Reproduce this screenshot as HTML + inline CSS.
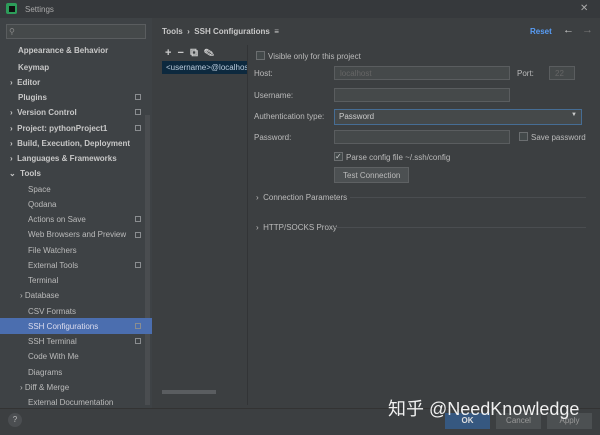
<!DOCTYPE html><html><head><style>
*{margin:0;padding:0;box-sizing:border-box}
body{width:600px;height:435px;background:#3c3f41;font-family:"Liberation Sans",sans-serif;font-size:8px;color:#bbb;position:relative;overflow:hidden}
.a{position:absolute;white-space:nowrap}
.side{left:0;top:18px;width:152px;height:390px;background:#3e4245}
.b{font-weight:bold;color:#c8c8c8}
.inp{position:absolute;background:#45494a;border:1px solid #5a5d5f;height:14px}
.ic{position:absolute;width:6px;height:6px;border:1px solid #8a8d90;left:135px}
.cb{position:absolute;width:9px;height:9px;border:1px solid #6b6e70;background:#43494a}
</style></head><body>
<div class="a" style="left:0;top:0;width:600px;height:18px;background:#36393c"></div>
<div class="a" style="left:6px;top:3px;width:11px;height:11px;background:#2d9d5a;border-radius:2px"></div>
<div class="a" style="left:9px;top:6px;width:6px;height:6px;background:#111"></div>
<div class="a" style="left:25px;top:5px;color:#aaa">Settings</div>
<div class="a" style="left:580px;top:3px;color:#aaa;font-size:10px">✕</div>
<div class="a side"></div>
<div class="a" style="left:6px;top:24px;width:140px;height:15px;background:#45494a;border:1px solid #5a5d5f"></div>
<div class="a" style="left:9px;top:27px;color:#888">⚲</div>
<div class="a" style="left:145px;top:115px;width:5px;height:290px;background:#4a4d50"></div>
<div class="a" style="left:0;top:318px;width:152px;height:16px;background:#4b6eaf"></div>
<div class="a b" style="left:18px;top:46px">Appearance &amp; Behavior</div>
<div class="a b" style="left:18px;top:63px">Keymap</div>
<div class="a b" style="left:10px;top:78px">›&nbsp; Editor</div>
<div class="a b" style="left:18px;top:93px">Plugins</div>
<div class="a b" style="left:10px;top:108px">›&nbsp; Version Control</div>
<div class="a b" style="left:10px;top:124px">›&nbsp; Project: pythonProject1</div>
<div class="a b" style="left:10px;top:139px">›&nbsp; Build, Execution, Deployment</div>
<div class="a b" style="left:10px;top:154px">›&nbsp; Languages &amp; Frameworks</div>
<div class="a b" style="left:9px;top:169px">⌄&nbsp; Tools</div>
<div class="ic" style="top:94px"></div><div class="ic" style="top:109px"></div><div class="ic" style="top:125px"></div><div class="ic" style="top:216px"></div><div class="ic" style="top:232px"></div><div class="ic" style="top:262px"></div><div class="ic" style="top:323px"></div><div class="ic" style="top:338px"></div>
<div class="a" style="left:28px;top:185px">Space</div>
<div class="a" style="left:28px;top:200px">Qodana</div>
<div class="a" style="left:28px;top:215px">Actions on Save</div>
<div class="a" style="left:28px;top:230px">Web Browsers and Preview</div>
<div class="a" style="left:28px;top:246px">File Watchers</div>
<div class="a" style="left:28px;top:261px">External Tools</div>
<div class="a" style="left:28px;top:276px">Terminal</div>
<div class="a" style="left:20px;top:291px">› Database</div>
<div class="a" style="left:28px;top:307px">CSV Formats</div>
<div class="a" style="left:28px;top:322px;color:#dde">SSH Configurations</div>
<div class="a" style="left:28px;top:337px">SSH Terminal</div>
<div class="a" style="left:28px;top:352px">Code With Me</div>
<div class="a" style="left:28px;top:368px">Diagrams</div>
<div class="a" style="left:20px;top:383px">› Diff &amp; Merge</div>
<div class="a" style="left:28px;top:398px">External Documentation</div>
<div class="a b" style="left:162px;top:27px">Tools &nbsp;›&nbsp; SSH Configurations &nbsp;≡</div>
<div class="a b" style="left:530px;top:27px;color:#589df6">Reset</div>
<div class="a" style="left:563px;top:24px;font-size:11px;color:#ccc">←</div>
<div class="a" style="left:582px;top:24px;font-size:11px;color:#777">→</div>
<div class="a" style="left:165px;top:47px;font-size:11px;color:#ccc;font-weight:bold">+&nbsp; −&nbsp; ⧉&nbsp; ✎</div>
<div class="a" style="left:162px;top:61px;width:86px;height:13px;background:#0d293e"></div>
<div class="a" style="left:166px;top:63px;color:#bcd;overflow:hidden;width:82px">&lt;username&gt;@localhost</div>
<div class="a" style="left:247px;top:45px;width:1px;height:360px;background:#323436"></div>
<div class="a" style="left:162px;top:390px;width:54px;height:4px;background:#5a5d60"></div>
<div class="cb" style="left:256px;top:51px"></div>
<div class="a" style="left:268px;top:52px">Visible only for this project</div>
<div class="a" style="left:254px;top:69px">Host:</div>
<div class="inp" style="left:334px;top:66px;width:176px;color:#666;padding:2px 5px">localhost</div>
<div class="a" style="left:517px;top:69px">Port:</div>
<div class="inp" style="left:549px;top:66px;width:26px;color:#666;padding:2px 5px">22</div>
<div class="a" style="left:254px;top:91px">Username:</div>
<div class="inp" style="left:334px;top:88px;width:176px"></div>
<div class="a" style="left:254px;top:112px">Authentication type:</div>
<div class="a" style="left:334px;top:109px;width:248px;height:16px;background:#45494a;border:1.5px solid #466d94;padding:2px 4px;color:#ccc">Password<span style="position:absolute;right:4px;top:2px;font-size:6px">▼</span></div>
<div class="a" style="left:254px;top:133px">Password:</div>
<div class="inp" style="left:334px;top:130px;width:176px"></div>
<div class="cb" style="left:519px;top:132px"></div>
<div class="a" style="left:531px;top:133px">Save password</div>
<div class="cb" style="left:334px;top:152px;font-size:8px;line-height:7px;color:#ccc">✓</div>
<div class="a" style="left:346px;top:153px">Parse config file ~/.ssh/config</div>
<div class="a" style="left:334px;top:167px;width:75px;height:16px;background:#4c5052;border:1px solid #5e6163;padding:3px 8px">Test Connection</div>
<div class="a" style="left:256px;top:193px">›&nbsp; Connection Parameters</div>
<div class="a" style="left:350px;top:197px;width:236px;height:1px;background:#4a4d50"></div>
<div class="a" style="left:256px;top:223px">›&nbsp; HTTP/SOCKS Proxy</div>
<div class="a" style="left:335px;top:227px;width:251px;height:1px;background:#4a4d50"></div>
<div class="a" style="left:0;top:408px;width:600px;height:27px;background:#3c3f41;border-top:1px solid #333"></div>
<div class="a" style="left:8px;top:413px;width:14px;height:14px;border-radius:50%;background:#4b4e51;color:#bbb;text-align:center;line-height:14px">?</div>
<div class="a" style="left:445px;top:413px;width:45px;height:16px;background:#365880;color:#ddd;font-weight:bold;text-align:center;line-height:16px">OK</div>
<div class="a" style="left:496px;top:413px;width:45px;height:16px;background:#4c5052;color:#999;text-align:center;line-height:16px">Cancel</div>
<div class="a" style="left:547px;top:413px;width:45px;height:16px;background:#4c5052;color:#999;text-align:center;line-height:16px">Apply</div>
<div class="a" style="left:388px;top:395px;font-size:18px;color:#f0f0f0;font-family:'Liberation Sans','Noto Sans CJK SC',sans-serif">知乎 @NeedKnowledge</div>
</body></html>
